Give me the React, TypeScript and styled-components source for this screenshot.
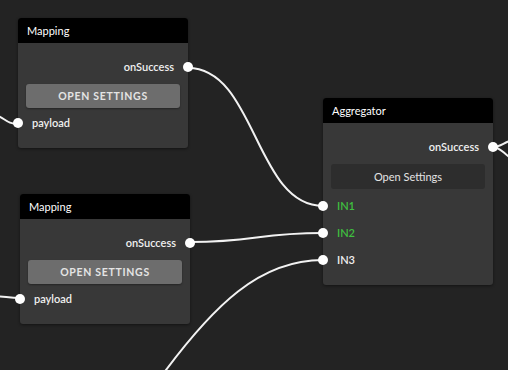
import styled, { createGlobalStyle } from 'styled-components';

const GlobalStyle = createGlobalStyle`
  html, body {
    margin: 0;
    padding: 0;
    background: #232323;
  }
  body {
    font-family: Lato, "Open Sans", sans-serif;
  }
`;

// Canvas
const Canvas = styled.div`
  position: relative;
  width: 508px;
  height: 370px;
  overflow: hidden;
  background: #232323;
`;

const Edges = styled.svg`
  position: absolute;
  left: 0;
  top: 0;
  width: 508px;
  height: 370px;
`;

// Node
const Node = styled.div<{ $x: number; $y: number }>`
  position: absolute;
  left: ${(p) => p.$x}px;
  top: ${(p) => p.$y}px;
  width: 170px;
  display: flex;
  flex-direction: column;
  background: #383838;
  border-radius: 3px;
  box-shadow: 0 1px 3px rgba(0, 0, 0, 0.45);
`;

const Header = styled.div`
  height: 25px;
  display: flex;
  align-items: center;
  padding: 0 9px 1px;
  box-sizing: border-box;
  background: #000;
  color: #fff;
  font-size: 11px;
  border-radius: 3px 3px 0 0;
`;

const Body = styled.div`
  display: flex;
  flex-direction: column;
  padding: 10px 0 12px;
`;

const Port = styled.div<{ $side: 'in' | 'out'; $active?: boolean }>`
  position: relative;
  height: 27px;
  display: flex;
  align-items: center;
  justify-content: ${(p) => (p.$side === 'out' ? 'flex-end' : 'flex-start')};
  padding: 0 14px;
  font-size: 11px;
  font-weight: 600;
  color: ${(p) => (p.$active ? '#3fbf3f' : '#f0f0f0')};
`;

const Dot = styled.span<{ $side: 'in' | 'out' }>`
  position: absolute;
  top: 50%;
  ${(p) => (p.$side === 'out' ? 'right: -5px;' : 'left: -5px;')}
  width: 10px;
  height: 10px;
  margin-top: -5px;
  border-radius: 50%;
  background: #fff;
`;

const SettingsButton = styled.button<{ $variant: 'caps' | 'plain' }>`
  margin: 4px 8px 3px;
  height: 24px;
  border: none;
  border-radius: 3px;
  font-family: Lato, "Open Sans", sans-serif;
  cursor: pointer;
  ${(p) =>
    p.$variant === 'caps'
      ? `
    margin-bottom: 1px;
    background: #6d6d6d;
    color: #e4e4e4;
    font-size: 10.5px;
    font-weight: 700;
    letter-spacing: 0.7px;
    text-transform: uppercase;
    box-shadow: 0 1px 2px rgba(0,0,0,0.35);
  `
      : `
    background: #2d2d2d;
    color: #e4e4e4;
    font-size: 11px;
    height: 25px;
  `}
`;

interface PortDef {
  name: string;
  active?: boolean;
}

interface NodeProps {
  x: number;
  y: number;
  title: string;
  outputs: PortDef[];
  inputs: PortDef[];
  variant: 'caps' | 'plain';
}

function GraphNode({ x, y, title, outputs, inputs, variant }: NodeProps) {
  return (
    <Node $x={x} $y={y}>
      <Header>{title}</Header>
      <Body>
        {outputs.map((o) => (
          <Port key={o.name} $side="out" $active={o.active}>
            {o.name}
            <Dot $side="out" />
          </Port>
        ))}
        <SettingsButton $variant={variant}>Open Settings</SettingsButton>
        {inputs.map((i) => (
          <Port key={i.name} $side="in" $active={i.active}>
            {i.name}
            <Dot $side="in" />
          </Port>
        ))}
      </Body>
    </Node>
  );
}

const edges = [
  'M188 68 C 256 68, 255 206, 323 206',
  'M190 242 C 256 242, 257 233, 323 233',
  'M323 260 C 262 260, 215 300, 150 392',
  'M-10 112 C 6 118, 6 124, 18 124',
  'M-10 296 C 4 296, 8 298, 20 298',
  'M493 147 C 500 147, 503 143, 512 140',
  'M493 147 C 500 147, 503 153, 512 159',
];

export default function App() {
  return (
    <Canvas>
      <GlobalStyle />
      <Edges viewBox="0 0 508 370">
        {edges.map((d) => (
          <path key={d} d={d} fill="none" stroke="#f2f2f2" strokeWidth={2} />
        ))}
      </Edges>
      <GraphNode
        x={18}
        y={18}
        title="Mapping"
        outputs={[{ name: 'onSuccess' }]}
        inputs={[{ name: 'payload' }]}
        variant="caps"
      />
      <GraphNode
        x={20}
        y={194}
        title="Mapping"
        outputs={[{ name: 'onSuccess' }]}
        inputs={[{ name: 'payload' }]}
        variant="caps"
      />
      <GraphNode
        x={323}
        y={98}
        title="Aggregator"
        outputs={[{ name: 'onSuccess' }]}
        inputs={[
          { name: 'IN1', active: true },
          { name: 'IN2', active: true },
          { name: 'IN3' },
        ]}
        variant="plain"
      />
    </Canvas>
  );
}
